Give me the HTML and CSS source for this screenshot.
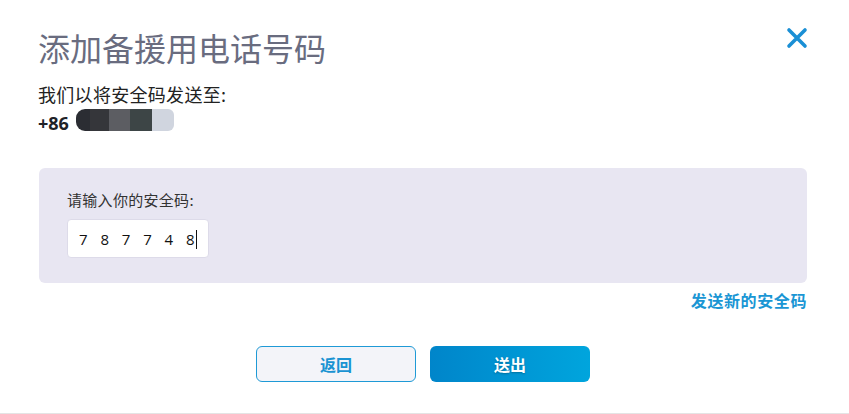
FILE: index.html
```html
<!DOCTYPE html>
<html lang="zh-CN">
<head>
    <meta charset="UTF-8">
    <meta name="viewport" content="width=device-width, initial-scale=1.0">
    <title>添加备援用电话号码</title>
    <link rel="stylesheet" href="styles.css">
</head>
<body>
    <div class="dialog">
        <div class="dialog-head">
            <h1>添加备援用电话号码</h1>
            <button class="close" aria-label="关闭">
                <svg width="22" height="22" viewBox="0 0 22 22">
                    <path d="M3 3 L19 19 M19 3 L3 19" stroke="#1a8fd5" stroke-width="3.6" stroke-linecap="round" fill="none"/>
                </svg>
            </button>
        </div>
        <p class="sent-to">我们以将安全码发送至:</p>
        <div class="phone">
            <span class="prefix">+86</span>
            <span class="mask">
                <span class="m1"></span><span class="m2"></span><span class="m3"></span><span class="m4"></span><span class="m5"></span>
            </span>
        </div>

        <div class="code-panel">
            <label for="code">请输入你的安全码:</label>
            <div class="code-box" id="code">
                <span>7</span><span>8</span><span>7</span><span>7</span><span>4</span><span>8<i class="caret"></i></span>
            </div>
        </div>
        <div class="resend"><a href="#">发送新的安全码</a></div>

        <div class="actions">
            <button class="btn btn-back">返回</button>
            <button class="btn btn-send">送出</button>
        </div>
    </div>
</body>
</html>
```

FILE: styles.css
```css
body { margin: 0; font-family: "Open Sans", "Noto Sans CJK SC", sans-serif; background: #fff; }
.dialog { height: 414px; padding: 27px 42px 0 39px; box-sizing: border-box; border-bottom: 1px solid #e4e4e4; }
.dialog-head { display: flex; justify-content: space-between; align-items: flex-start; }
.dialog-head h1 { margin: 0 0 0 -1px; font-size: 32px; line-height: 40px; font-weight: 400; color: #696c7f; font-family: "Noto Sans CJK SC", sans-serif; }
.close { border: none; background: none; padding: 0; margin: 0 -1px 0 0; cursor: pointer; display: flex; }
.sent-to { margin: 15px 0 0 -1px; font-size: 18px; line-height: 24px; color: #222; font-family: "Noto Sans CJK SC", sans-serif; letter-spacing: 0.3px; }
.phone { display: flex; align-items: center; margin-top: 3px; height: 22px; }
.phone .prefix { font-size: 18px; font-weight: 700; color: #1f2228; margin-right: 7px; margin-left: -1px; padding-top: 5px; }
.mask { display: flex; height: 22px; }
.mask span { display: block; width: 21px; height: 22px; }
.mask .m1 { width: 14px; background: #2b2d33; border-radius: 9px 0 0 9px; }
.mask .m2 { width: 19px; background: #35363a; }
.mask .m3 { background: #5c5d62; }
.mask .m4 { width: 22px; background: #3d4546; }
.mask .m5 { width: 22px; background: #d0d5df; border-radius: 0 6px 6px 0; }
.code-panel { margin-top: 37px; background: #e8e6f2; border-radius: 6px; padding: 22px 28px 25px; height: 115px; box-sizing: border-box; }
.code-panel label { display: block; font-size: 15px; line-height: 20px; color: #333; font-family: "Noto Sans CJK SC", sans-serif; letter-spacing: 0.3px; }
.code-box { margin-top: 9px; width: 142px; height: 39px; box-sizing: border-box; background: #fff; border: 1px solid #dddbe9; border-radius: 4px; display: flex; align-items: center; gap: 12.8px; padding-left: 11px; font-size: 15px; color: #111; }
.code-box span { position: relative; }
.caret { position: absolute; right: -3px; top: 1px; width: 1px; height: 19px; background: #111; }
.resend { text-align: right; margin-top: 7px; line-height: 20px; }
.resend a { font-size: 16px; font-weight: 700; color: #1a96d4; text-decoration: none; font-family: "Noto Sans CJK SC", sans-serif; letter-spacing: 0.6px; }
.actions { display: flex; justify-content: center; gap: 14px; margin-top: 35px; }
.btn { width: 160px; height: 36px; border-radius: 6px; font-size: 16px; font-weight: 700; font-family: "Noto Sans CJK SC", sans-serif; cursor: pointer; }
.btn-back { background: #f3f4f9; border: 1px solid #1f9ad6; color: #1a93d2; }
.btn-send { background: linear-gradient(90deg, #0085ca, #00a5dd); border: none; color: #fff; text-shadow: 0 1px 2px rgba(0,0,0,0.25); }
```
